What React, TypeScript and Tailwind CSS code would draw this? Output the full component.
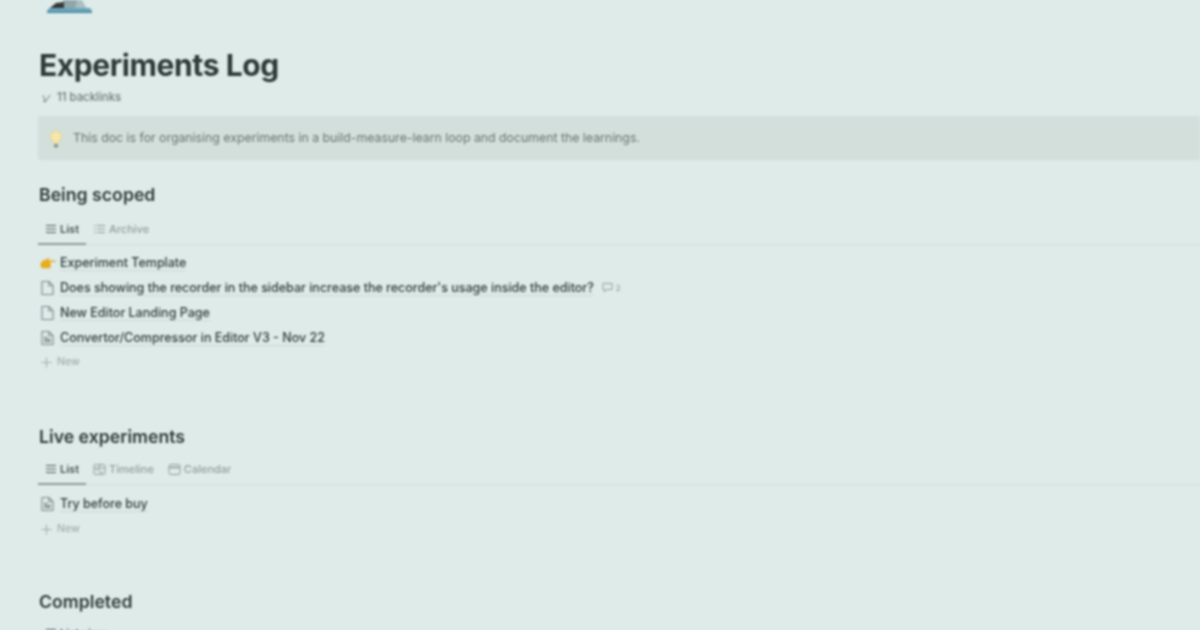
import type { ReactNode } from 'react'

const ink = 'text-[#2f3a37]'

function ListIcon({ muted }: { muted?: boolean }) {
  return (
    <svg width="12" height="12" viewBox="0 0 12 12" className={muted ? 'text-[#8f9a97]' : 'text-[#4a5553]'} fill="none" stroke="currentColor" strokeWidth="1.200">
      <path d="M1 2.500h10M1 6h10M1 9.500h10" />
    </svg>
  )
}

function ArchiveIcon() {
  return (
    <svg width="13" height="12" viewBox="0 0 13 12" className="text-[#8f9a97]" fill="none" stroke="currentColor" strokeWidth="1.100">
      <path d="M1 2.500h1.500M4 2.500h8M1 6h1.500M4 6h8M1 9.500h1.500M4 9.500h8" />
    </svg>
  )
}

function TimelineIcon() {
  return (
    <svg width="13" height="13" viewBox="0 0 13 13" className="text-[#8f9a97]" fill="none" stroke="currentColor" strokeWidth="1">
      <rect x="1" y="1.500" width="11" height="10" rx="1.500" />
      <path d="M1 5h11M3 7h4M6 9.500h4M6.500 1.500v3.500" />
    </svg>
  )
}

function CalendarIcon() {
  return (
    <svg width="13" height="13" viewBox="0 0 13 13" className="text-[#8f9a97]" fill="none" stroke="currentColor" strokeWidth="1">
      <rect x="1" y="1.500" width="11" height="10" rx="2" />
      <path d="M1 4.500h11" strokeWidth="1.600" />
    </svg>
  )
}

function PageIcon({ lines }: { lines?: boolean }) {
  return (
    <svg width="15" height="16" viewBox="0 0 15 16" className="shrink-0 text-[#7f8a88]" fill="none" stroke="currentColor" strokeWidth="1.100">
      <path d="M2 1.500h6.800L13 5.700v8.800H2z" strokeLinejoin="round" />
      <path d="M8.800 1.500v4.200H13" />
      {lines && <path d="M4.200 7.500h3M4.200 9.500h6.600M4.200 11.500h6.600" strokeWidth="1.300" />}
    </svg>
  )
}

function Bulb() {
  return (
    <svg width="14" height="20" viewBox="0 0 14 20" className="mt-[4px] shrink-0">
      <path d="M7 1a5.500 5.500 0 0 0-3.200 10c.7.6 1 1.300 1 2.400h4.400c0-1.100.3-1.800 1-2.400A5.500 5.500 0 0 0 7 1z" fill="#f5e6ab" stroke="#e8d283" strokeWidth="0.800" />
      <rect x="5" y="14" width="4" height="3.600" rx="0.800" fill="#8b9492" />
    </svg>
  )
}

function PointingHand() {
  return (
    <svg width="16" height="12" viewBox="0 0 16 12" className="shrink-0">
      <path d="M0.500 8c0-2.500 1.500-3.900 3.200-4.500L8.500 1.200c1-.4 1.500.7.800 1.300L8 3.500h7c.9 0 .9 1.400 0 1.400h-4.500L10.800 9c0 1.400-.8 2.300-2 2.300H3C1.500 11.300.5 9.900.5 8z" fill="#e9ac1f" />
    </svg>
  )
}

function Tab({ icon, label, active }: { icon: ReactNode; label: string; active?: boolean }) {
  return (
    <div className={`-mb-px flex h-[30px] items-center gap-[3px] border-b-2 px-[7px] ${active ? 'border-[#8d9896]' : 'border-transparent'}`}>
      {icon}
      <span className={`text-[11px] ${active ? 'font-semibold text-[#4a5553]' : 'font-medium text-[#929d9a]'}`}>{label}</span>
    </div>
  )
}

function Row({ icon, children, extra }: { icon: ReactNode; children: string; extra?: ReactNode }) {
  return (
    <div className="flex h-[25px] items-center">
      <div className="flex w-[22px] shrink-0 items-center pl-[2px]">{icon}</div>
      <span className={`border-b border-[#cfdad8] text-[12.500px] leading-[15px] font-medium ${ink}`}>{children}</span>
      {extra}
    </div>
  )
}

function NewRow() {
  return (
    <div className="flex h-[24px] items-center gap-[5px] pl-[3px] text-[#a3adab]">
      <svg width="11" height="11" viewBox="0 0 11 11" fill="none" stroke="currentColor" strokeWidth="1">
        <path d="M5.500 0.500v10M0.500 5.500h10" />
      </svg>
      <span className="text-[10.500px] font-medium">New</span>
    </div>
  )
}

function SectionTitle({ children }: { children: string }) {
  return <h2 className={`pl-[1px] text-[17.700px] leading-[24px] font-semibold ${ink}`}>{children}</h2>
}

export default function App() {
  return (
    <div className="h-[630px] w-[1200px] overflow-hidden bg-[#deebe9] font-['Inter',sans-serif]">
      <div className="pl-[38px] blur-[0.8px]">
        <svg width="46" height="14" viewBox="0 0 46 14" className="ml-[9px]">
          <path d="M16 0h18v9H16z" fill="#8fa6aa" />
          <path d="M3 8l6-5 8-1v6z" fill="#33393a" />
          <path d="M30 0h5l5 9H28z" fill="#a9c0c2" />
          <path d="M2 8h41l2 3v2H0v-2z" fill="#6fa5b6" />
          <path d="M0 11.500h45V13H0z" fill="#3f8aa6" />
        </svg>
        <h1 className={`mt-[33px] pl-[1px] text-[30px] leading-[37px] font-bold tracking-[-0.4px] ${ink}`}>Experiments Log</h1>
        <div className="mt-[7px] flex h-[14px] items-center gap-[6px] pl-[4px] text-[#6f7a78]">
          <svg width="9" height="9" viewBox="0 0 9 9" fill="none" stroke="currentColor" strokeWidth="1">
            <path d="M1 1.500l2.500 6M3.500 7.500H1.200M3.500 7.500L8 1" />
          </svg>
          <span className="text-[11.400px] font-medium">11 backlinks</span>
        </div>
        <div className="mt-[11px] flex h-[44px] items-center gap-[10px] rounded-l-[3px] bg-[#d2dfdb] pl-[11px]">
          <Bulb />
          <p className="text-[12.300px] text-[#68736f]">This doc is for organising experiments in a build-measure-learn loop and document the learnings.</p>
        </div>

        <div className="mt-[23px]">
          <SectionTitle>Being scoped</SectionTitle>
        </div>
        <div className="mt-[8px] flex border-b border-[#d3dfdc]">
          <Tab icon={<ListIcon />} label="List" active />
          <Tab icon={<ArchiveIcon />} label="Archive" />
        </div>
        <div className="mt-[5px]">
          <Row icon={<PointingHand />}>Experiment Template</Row>
          <Row
            icon={<PageIcon />}
            extra={
              <span className="ml-[8px] flex items-center gap-[3px] text-[#8f9a97]">
                <svg width="11" height="11" viewBox="0 0 11 11" fill="none" stroke="currentColor" strokeWidth="0.900">
                  <path d="M1 1.500h9v6H4.500L2.500 10V7.500H1z" strokeLinejoin="round" />
                </svg>
                <span className="text-[8px]">2</span>
              </span>
            }
          >
            Does showing the recorder in the sidebar increase the recorder's usage inside the editor?
          </Row>
          <Row icon={<PageIcon />}>New Editor Landing Page</Row>
          <Row icon={<PageIcon lines />}>Convertor/Compressor in Editor V3 - Nov 22</Row>
          <NewRow />
        </div>

        <div className="mt-[51px]">
          <SectionTitle>Live experiments</SectionTitle>
        </div>
        <div className="mt-[6px] flex border-b border-[#d3dfdc]">
          <Tab icon={<ListIcon />} label="List" active />
          <Tab icon={<TimelineIcon />} label="Timeline" />
          <Tab icon={<CalendarIcon />} label="Calendar" />
        </div>
        <div className="mt-[6px]">
          <Row icon={<PageIcon lines />}>Try before buy</Row>
          <div className="mt-[1px]">
            <NewRow />
          </div>
        </div>

        <div className="mt-[49px]">
          <SectionTitle>Completed</SectionTitle>
        </div>
        <div className="mt-[5px] flex border-b border-[#d3dfdc]">
          <Tab icon={<ListIcon />} label="List view" active />
        </div>
      </div>
    </div>
  )
}
